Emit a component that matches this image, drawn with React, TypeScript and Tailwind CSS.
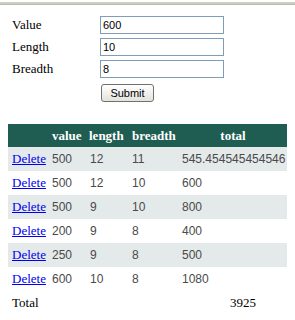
const rows = [
  { value: "500", length: "12", breadth: "11", total: "545.454545454546" },
  { value: "500", length: "12", breadth: "10", total: "600" },
  { value: "500", length: "9", breadth: "10", total: "800" },
  { value: "200", length: "9", breadth: "8", total: "400" },
  { value: "250", length: "9", breadth: "8", total: "500" },
  { value: "600", length: "10", breadth: "8", total: "1080" },
];

const fields = [
  { label: "Value", val: "600" },
  { label: "Length", val: "10" },
  { label: "Breadth", val: "8" },
];

export default function App() {
  return (
    <div className="w-[295px] h-[320px] bg-white overflow-hidden" style={{ fontFamily: '"Liberation Serif", serif' }}>
      <div className="h-[2px]" />
      <div className="h-[3px] bg-[#cdcec2] border-b border-[#b9baae]" />

      {/* form */}
      <div className="flex flex-col gap-[4px] pl-[12px] pt-[11px]">
        {fields.map((f) => (
          <div key={f.label} className="flex items-center h-[18px]">
            <span className="w-[88px] text-[13px] text-black">{f.label}</span>
            <input
              readOnly
              value={f.val}
              className="w-[124px] h-[18px] border border-[#7f9db9] bg-white px-[2px] text-[11px] text-black outline-none"
              style={{ fontFamily: '"Liberation Sans", Arial, sans-serif' }}
            />
          </div>
        ))}
        <div className="flex pl-[89px] pt-[2px]">
          <button
            className="w-[53px] h-[18px] rounded-[3px] border border-[#707070] bg-gradient-to-b from-[#ffffff] to-[#e3e3dc] text-[11px] text-black leading-none"
            style={{ fontFamily: '"Liberation Sans", Arial, sans-serif' }}
          >
            Submit
          </button>
        </div>
      </div>

      {/* table */}
      <table className="ml-[8px] mt-[22px] w-[279px] border-collapse table-fixed">
        <colgroup>
          <col className="w-[41px]" />
          <col className="w-[38px]" />
          <col className="w-[42px]" />
          <col className="w-[50px]" />
          <col className="w-[108px]" />
        </colgroup>
        <thead>
          <tr className="h-[23px] bg-[#1f5c51] text-white text-[13px] font-bold">
            <th />
            <th className="text-left pl-[3px]">value</th>
            <th className="text-left pl-[2px]">length</th>
            <th className="text-left pl-[3px]">breadth</th>
            <th className="text-center">total</th>
          </tr>
        </thead>
        <tbody>
          {rows.map((r, i) => (
            <tr key={i} className={`h-[24px] ${i % 2 === 0 ? "bg-[#e4e9ea]" : "bg-white"}`}>
              <td className="pl-[4px] text-[13px]">
                <a href="#" className="text-[#0000ee] underline">Delete</a>
              </td>
              {[r.value, r.length, r.breadth, r.total].map((c, j) => (
                <td
                  key={j}
                  className="pl-[3px] text-[12px] text-[#4a4a4a] whitespace-nowrap"
                  style={{ fontFamily: '"Liberation Sans", Arial, sans-serif' }}
                >
                  {c}
                </td>
              ))}
            </tr>
          ))}
          <tr className="h-[24px] text-[13px] text-black">
            <td className="pl-[4px]" colSpan={4}>Total</td>
            <td className="pl-[51px]">3925</td>
          </tr>
        </tbody>
      </table>
    </div>
  );
}
